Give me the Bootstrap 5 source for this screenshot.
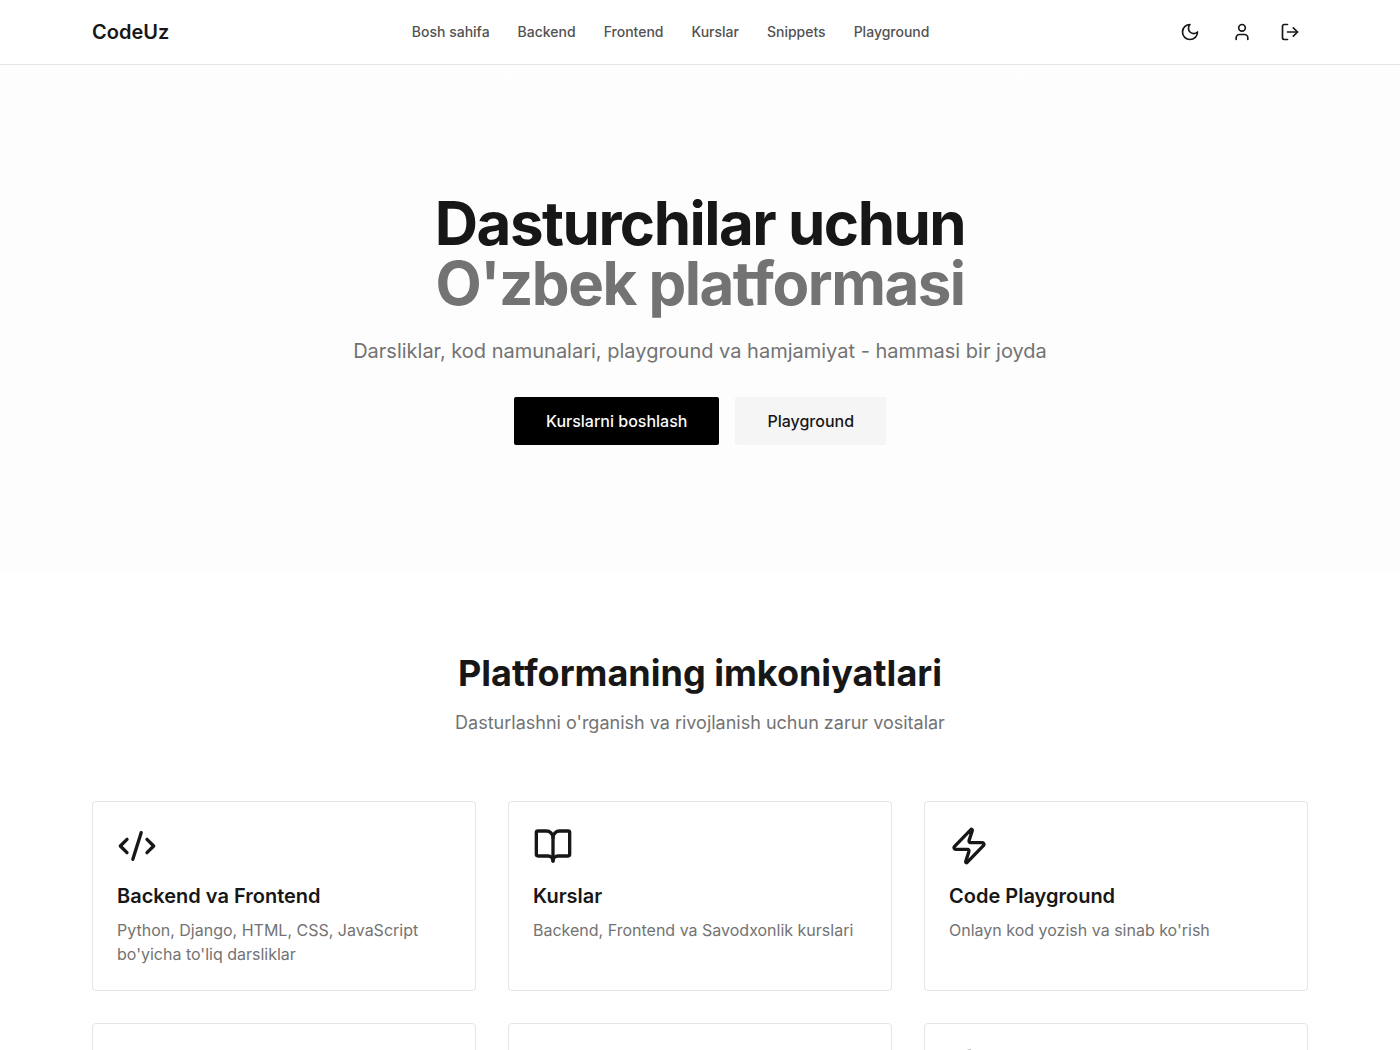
<!DOCTYPE html>
<html lang="uz">
<head>
<meta charset="utf-8">
<title>CodeUz</title>
<link href="https://cdn.jsdelivr.net/npm/bootstrap@5.3.0/dist/css/bootstrap.min.css" rel="stylesheet">
<style>
body { font-family: Inter, "Liberation Sans", sans-serif; color: #171717; background: #fff; font-size: 16px; -webkit-font-smoothing: antialiased; }
.wrap-main { width: 1216px; margin: 0 auto; }
.top-bar { height: 65px; border-bottom: 1px solid #e5e5e5; background: #fff; }
.brand-txt { font-size: 20px; font-weight: 600; color: #171717; letter-spacing: 0; line-height: 28px; text-decoration: none; }
.menu-link { font-size: 14px; font-weight: 500; line-height: 20px; color: #525252; text-decoration: none; }
.menu-row { gap: 28px; }
.nav-ico { width: 20px; height: 20px; stroke: #171717; fill: none; stroke-width: 2; stroke-linecap: round; stroke-linejoin: round; display: block; }
.ico-btn { width: 36px; height: 36px; padding: 8px; background: none; border: 0; }
.ico-btn-wide { margin-right: 16px; }
.ico-btn-mid { margin-right: 12px; }
.hero-band { height: 508px; background: linear-gradient(#fefefe, #fdfdfd 4%, #fdfdfd); }
.hero-head { font-size: 60px; line-height: 60px; font-weight: 700; letter-spacing: -1.5px; color: #171717; margin: 0 0 24px; }
.hero-head span { display: block; color: #737373; }
.hero-sub { font-size: 20px; line-height: 28px; color: #737373; margin: 0 0 32px; }
.cta { height: 48px; padding: 0 32px; font-size: 16px; font-weight: 500; line-height: 48px; border-radius: 2px; border: 0; }
.cta-dark { background: #000; color: #fafafa; }
.cta-soft { background: #f5f5f5; color: #171717; }
.cta-dark:hover { background: #000; color: #fafafa; }
.cta-soft:hover { background: #f5f5f5; color: #171717; }
.feat-band { padding-top: 80px; }
.feat-title { font-size: 36px; line-height: 40px; font-weight: 700; color: #171717; margin: 0 0 16px; }
.feat-sub { font-size: 18px; line-height: 28px; color: #737373; margin: 0 0 64px; }
.feat-grid { display: grid; grid-template-columns: repeat(3, 384px); gap: 32px; }
.feat-card { border: 1px solid #e5e5e5; border-radius: 4px; padding: 24px; background: #fff; height: 190px; }
.feat-ico { width: 40px; height: 40px; stroke: #171717; fill: none; stroke-width: 2; stroke-linecap: round; stroke-linejoin: round; display: block; margin-bottom: 16px; }
.feat-name { font-size: 20px; line-height: 28px; font-weight: 600; color: #171717; margin: 0 0 8px; }
.feat-text { font-size: 16px; line-height: 24px; color: #737373; margin: 0; }
</style>
</head>
<body>
<nav class="top-bar d-flex align-items-center">
  <div class="wrap-main d-flex align-items-center justify-content-between">
    <a class="brand-txt" href="#">CodeUz</a>
    <div class="menu-row d-flex align-items-center">
      <a class="menu-link" href="#">Bosh sahifa</a>
      <a class="menu-link" href="#">Backend</a>
      <a class="menu-link" href="#">Frontend</a>
      <a class="menu-link" href="#">Kurslar</a>
      <a class="menu-link" href="#">Snippets</a>
      <a class="menu-link" href="#">Playground</a>
    </div>
    <div class="d-flex align-items-center">
      <button class="ico-btn ico-btn-wide" type="button" aria-label="Mavzu"><svg class="nav-ico" viewBox="0 0 24 24"><path d="M12 3a6 6 0 0 0 9 9 9 9 0 1 1-9-9Z"/></svg></button>
      <button class="ico-btn ico-btn-mid" type="button" aria-label="Profil"><svg class="nav-ico" viewBox="0 0 24 24"><path d="M19 21v-2a4 4 0 0 0-4-4H9a4 4 0 0 0-4 4v2"/><circle cx="12" cy="7" r="4"/></svg></button>
      <button class="ico-btn" type="button" aria-label="Chiqish"><svg class="nav-ico" viewBox="0 0 24 24"><path d="M9 21H5a2 2 0 0 1-2-2V5a2 2 0 0 1 2-2h4"/><polyline points="16 17 21 12 16 7"/><line x1="21" y1="12" x2="9" y2="12"/></svg></button>
    </div>
  </div>
</nav>
<section class="hero-band d-flex flex-column align-items-center justify-content-center text-center">
  <h1 class="hero-head">Dasturchilar uchun<span>O'zbek platformasi</span></h1>
  <p class="hero-sub">Darsliklar, kod namunalari, playground va hamjamiyat - hammasi bir joyda</p>
  <div class="d-flex justify-content-center gap-3">
    <a class="btn cta cta-dark" href="#">Kurslarni boshlash</a>
    <a class="btn cta cta-soft" href="#">Playground</a>
  </div>
</section>
<section class="feat-band">
  <div class="wrap-main">
    <div class="text-center">
      <h2 class="feat-title">Platformaning imkoniyatlari</h2>
      <p class="feat-sub">Dasturlashni o'rganish va rivojlanish uchun zarur vositalar</p>
    </div>
    <div class="feat-grid">
      <div class="feat-card">
        <svg class="feat-ico" viewBox="0 0 24 24"><path d="m18 16 4-4-4-4"/><path d="m6 8-4 4 4 4"/><path d="m14.5 4-5 16"/></svg>
        <h3 class="feat-name">Backend va Frontend</h3>
        <p class="feat-text">Python, Django, HTML, CSS, JavaScript bo'yicha to'liq darsliklar</p>
      </div>
      <div class="feat-card">
        <svg class="feat-ico" viewBox="0 0 24 24"><path d="M12 7v14"/><path d="M3 18a1 1 0 0 1-1-1V4a1 1 0 0 1 1-1h5a4 4 0 0 1 4 4 4 4 0 0 1 4-4h5a1 1 0 0 1 1 1v13a1 1 0 0 1-1 1h-6a3 3 0 0 0-3 3 3 3 0 0 0-3-3z"/></svg>
        <h3 class="feat-name">Kurslar</h3>
        <p class="feat-text">Backend, Frontend va Savodxonlik kurslari</p>
      </div>
      <div class="feat-card">
        <svg class="feat-ico" viewBox="0 0 24 24"><path d="M4 14a1 1 0 0 1-.78-1.63l9.9-10.2a.5.5 0 0 1 .86.46l-1.92 6.02A1 1 0 0 0 13 10h7a1 1 0 0 1 .78 1.63l-9.9 10.2a.5.5 0 0 1-.86-.46l1.92-6.02A1 1 0 0 0 11 14z"/></svg>
        <h3 class="feat-name">Code Playground</h3>
        <p class="feat-text">Onlayn kod yozish va sinab ko'rish</p>
      </div>
      <div class="feat-card"></div>
      <div class="feat-card"></div>
      <div class="feat-card">
        <svg class="feat-ico" viewBox="0 0 24 24"><path d="M11.5 2h1.5"/></svg>
      </div>
    </div>
  </div>
</section>
</body>
</html>
